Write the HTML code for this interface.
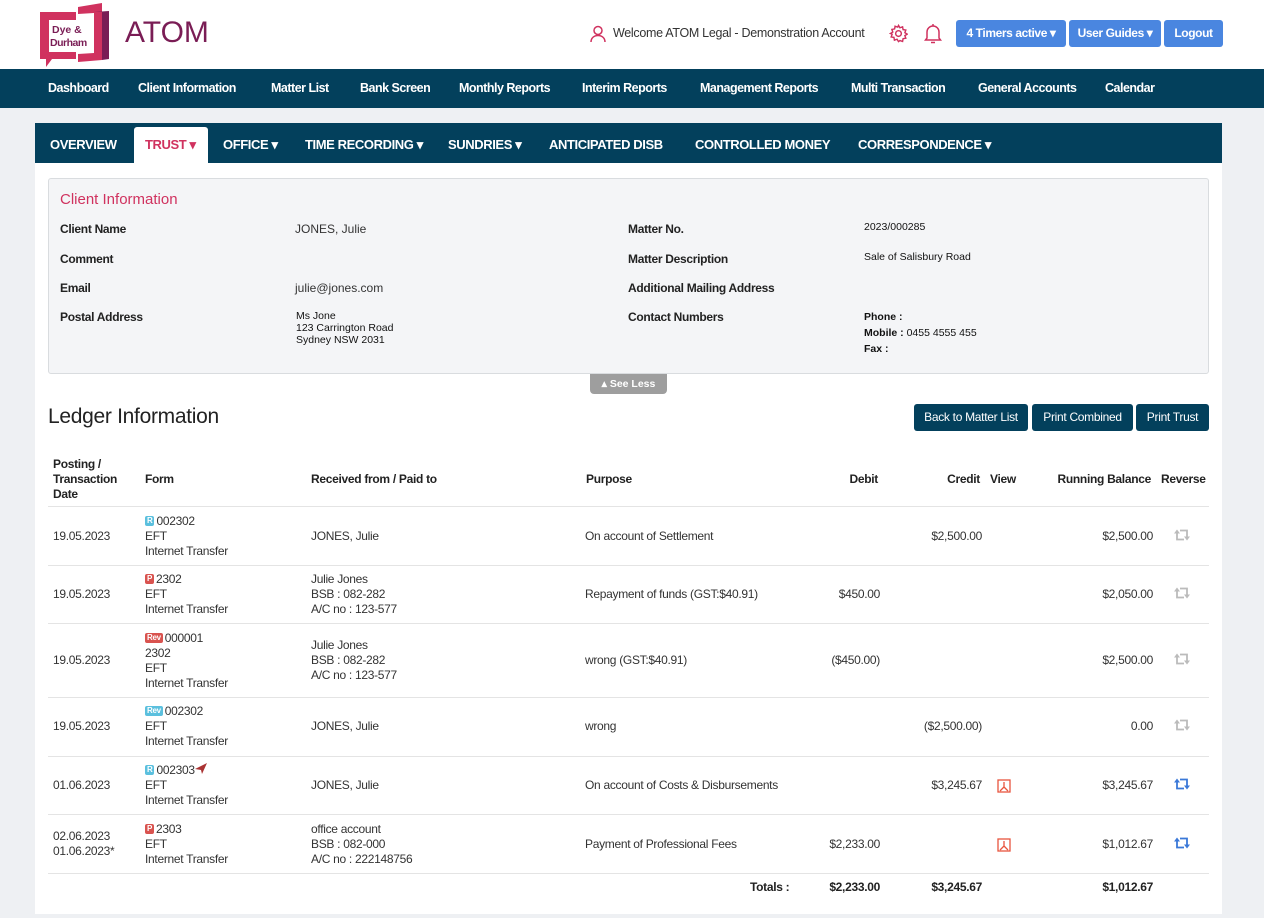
<!DOCTYPE html>
<html><head><meta charset="utf-8"><style>
*{margin:0;padding:0;box-sizing:border-box}
body{width:1264px;height:918px;background:#eef0f3;font-family:"Liberation Sans",sans-serif;position:relative;overflow:hidden;color:#333}
.a{position:absolute;white-space:nowrap}
#hdr{position:absolute;left:0;top:0;width:1264px;height:69px;background:#fff}
#nav{position:absolute;left:0;top:69px;width:1264px;height:39px;background:#03405c}
#nav span{position:absolute;top:12px;color:#fff;font-weight:bold;font-size:12.5px;letter-spacing:-0.5px}
#card{position:absolute;left:35px;top:123px;width:1187px;height:791px;background:#fff}
#tabs{position:absolute;left:35px;top:123px;width:1187px;height:40px;background:#03405c}
#tabs span{position:absolute;top:14px;color:#fff;font-weight:bold;font-size:13px;letter-spacing:-0.4px}
.btn{position:absolute;background:#4a86e0;color:#fff;font-weight:bold;font-size:12px;border-radius:3px;text-align:center;line-height:27px;letter-spacing:-0.4px}
.dk{position:absolute;background:#03405c;color:#fff;font-size:12px;border-radius:3px;text-align:center;line-height:27px;letter-spacing:-0.3px}
#info{position:absolute;left:48px;top:178px;width:1161px;height:196px;background:#f4f5f7;border:1px solid #d9dcdf;border-radius:3px}
.lb{position:absolute;font-weight:bold;font-size:12px;color:#222;letter-spacing:-0.3px}
.vl{position:absolute;font-size:12px;color:#333}
.sm{position:absolute;font-size:10.5px;color:#111;line-height:12px}
.t{position:absolute;font-size:12px;color:#333;line-height:15px;white-space:nowrap;letter-spacing:-0.3px}
.th{position:absolute;font-size:12px;font-weight:bold;color:#222;line-height:15px;letter-spacing:-0.3px}
.r{text-align:right}
.hl{position:absolute;left:48px;width:1161px;height:1px;background:#e4e4e4}
.bd{display:inline-block;font-size:8px;font-weight:bold;color:#fff;border-radius:2px;padding:0 2px;line-height:10px;vertical-align:2px;margin-right:2px}
.rb{background:#5bc0de}.pb{background:#d9534f}
.rev{position:absolute;width:16px;height:12px}
</style></head><body>
<div id="hdr">
<svg class="a" style="left:40px;top:2px" width="72" height="66" viewBox="0 0 72 66">
<path d="M0 10 L36 10 L36 18 L9 18 L9 50 L36 50 L36 57 L12 57 L6 65 L6 57 L0 57 Z" fill="#d0325f"/>
<path d="M38 5 L62 1 L62 58 L38 60 L38 52 L54 51 L54 11 L38 12 Z" fill="#d0325f"/>
<path d="M54 10 L69 9 L69 57 L62 58 L62 10 Z" fill="#7a1d55"/>
<text x="12" y="31" font-size="10.5" font-weight="bold" fill="#7a1d55" font-family="Liberation Sans">Dye &amp;</text>
<text x="10" y="44" font-size="10.5" font-weight="bold" fill="#7a1d55" font-family="Liberation Sans" letter-spacing="-0.5">Durham</text>
</svg>
<div class="a" style="left:125px;top:16px;font-size:30px;color:#7a1d55">ATOM</div>
<svg class="a" style="left:590px;top:25px" width="16" height="18" viewBox="0 0 16 18" fill="none" stroke="#d0325f" stroke-width="1.5"><circle cx="8" cy="5.5" r="4"/><path d="M1 17c0-4 3-6.5 7-6.5s7 2.5 7 6.5"/></svg>
<div class="a" style="left:613px;top:26px;font-size:12.5px;color:#333;letter-spacing:-0.3px">Welcome ATOM Legal - Demonstration Account</div>
<svg class="a" style="left:889px;top:24px" width="19" height="19" viewBox="0 0 20 20" fill="none" stroke="#d0325f" stroke-width="1.5"><circle cx="10" cy="10" r="3"/><path d="M10 1.5l1.5 2.5 2.8-1 .5 2.9 2.9.5-1 2.8 2.5 1.5-2.5 1.5 1 2.8-2.9.5-.5 2.9-2.8-1L10 18.5l-1.5-2.5-2.8 1-.5-2.9-2.9-.5 1-2.8L1.5 10 4 8.5l-1-2.8 2.9-.5.5-2.9 2.8 1z"/></svg>
<svg class="a" style="left:924px;top:23px" width="18" height="21" viewBox="0 0 18 21" fill="none" stroke="#d0325f" stroke-width="1.5"><path d="M3 15V9a6 6 0 0 1 12 0v6l1.5 2h-15z"/><path d="M7 19.5h4"/><path d="M9 1v2"/></svg>
<div class="btn" style="left:956px;top:20px;width:110px">4 Timers active ▾</div>
<div class="btn" style="left:1069px;top:20px;width:92px">User Guides ▾</div>
<div class="btn" style="left:1164px;top:20px;width:59px">Logout</div>
</div>
<div id="nav">
<span style="left:48px">Dashboard</span><span style="left:138px">Client Information</span><span style="left:271px">Matter List</span><span style="left:360px">Bank Screen</span><span style="left:459px">Monthly Reports</span><span style="left:582px">Interim Reports</span><span style="left:700px">Management Reports</span><span style="left:851px">Multi Transaction</span><span style="left:978px">General Accounts</span><span style="left:1105px">Calendar</span>
</div>
<div id="card"></div>
<div id="tabs">
<div class="a" style="left:99px;top:4px;width:74px;height:36px;background:#fff;border-radius:3px 3px 0 0"></div>
<span style="left:15px">OVERVIEW</span><span style="left:110px;color:#d0325f">TRUST ▾</span><span style="left:188px">OFFICE ▾</span><span style="left:270px">TIME RECORDING ▾</span><span style="left:413px">SUNDRIES ▾</span><span style="left:514px">ANTICIPATED DISB</span><span style="left:660px">CONTROLLED MONEY</span><span style="left:823px">CORRESPONDENCE ▾</span>
</div>
<div id="info"></div>
<div class="a" style="left:60px;top:191px;font-size:15px;color:#d0325f">Client Information</div>
<div class="lb" style="left:60px;top:222px">Client Name</div><div class="vl" style="left:295px;top:222px">JONES, Julie</div>
<div class="lb" style="left:60px;top:252px">Comment</div>
<div class="lb" style="left:60px;top:281px">Email</div><div class="vl" style="left:295px;top:281px">julie@jones.com</div>
<div class="lb" style="left:60px;top:310px">Postal Address</div>
<div class="sm" style="left:296px;top:310px">Ms Jone<br>123 Carrington Road<br>Sydney NSW 2031</div>
<div class="lb" style="left:628px;top:222px">Matter No.</div><div class="sm" style="left:864px;top:221px">2023/000285</div>
<div class="lb" style="left:628px;top:252px">Matter Description</div><div class="sm" style="left:864px;top:251px">Sale of Salisbury Road</div>
<div class="lb" style="left:628px;top:281px">Additional Mailing Address</div>
<div class="lb" style="left:628px;top:310px">Contact Numbers</div>
<div class="sm" style="left:864px;top:309px;line-height:16px;font-weight:bold">Phone :<br>Mobile : <span style="font-weight:normal">0455 4555 455</span><br>Fax :</div>
<div class="a" style="left:590px;top:374px;width:77px;height:20px;background:#9e9e9e;border-radius:0 0 4px 4px;color:#fff;font-size:10.5px;font-weight:bold;text-align:center;line-height:20px">▴ See Less</div>
<div class="a" style="left:48px;top:405px;font-size:21px;color:#222;letter-spacing:-0.3px">Ledger Information</div>
<div class="dk" style="left:914px;top:404px;width:114px">Back to Matter List</div>
<div class="dk" style="left:1032px;top:404px;width:101px">Print Combined</div>
<div class="dk" style="left:1136px;top:404px;width:73px">Print Trust</div>

<div class="th" style="left:53px;top:457px">Posting /<br>Transaction<br>Date</div>
<div class="th" style="left:145px;top:472px">Form</div>
<div class="th" style="left:311px;top:472px">Received from / Paid to</div>
<div class="th" style="left:586px;top:472px">Purpose</div>
<div class="th r" style="left:800px;top:472px;width:78px">Debit</div>
<div class="th r" style="left:900px;top:472px;width:80px">Credit</div>
<div class="th" style="left:990px;top:472px">View</div>
<div class="th r" style="left:1040px;top:472px;width:111px">Running Balance</div>
<div class="th" style="left:1161px;top:472px">Reverse</div>
<div class="hl" style="top:506px"></div><div class="hl" style="top:565px"></div><div class="hl" style="top:623px"></div><div class="hl" style="top:697px"></div><div class="hl" style="top:756px"></div><div class="hl" style="top:814px"></div><div class="hl" style="top:873px"></div>

<div class="t" style="left:53px;top:529px">19.05.2023</div>
<div class="t" style="left:145px;top:514px"><span class="bd rb">R</span>002302<br>EFT<br>Internet Transfer</div>
<div class="t" style="left:311px;top:529px">JONES, Julie</div>
<div class="t" style="left:585px;top:529px">On account of Settlement</div>
<div class="t r" style="left:880px;top:529px;width:102px">$2,500.00</div>
<div class="t r" style="left:1040px;top:529px;width:113px">$2,500.00</div>

<div class="t" style="left:53px;top:587px">19.05.2023</div>
<div class="t" style="left:145px;top:572px"><span class="bd pb">P</span>2302<br>EFT<br>Internet Transfer</div>
<div class="t" style="left:311px;top:572px">Julie Jones<br>BSB : 082-282<br>A/C no : 123-577</div>
<div class="t" style="left:585px;top:587px">Repayment of funds (GST:$40.91)</div>
<div class="t r" style="left:780px;top:587px;width:100px">$450.00</div>
<div class="t r" style="left:1040px;top:587px;width:113px">$2,050.00</div>

<div class="t" style="left:53px;top:653px">19.05.2023</div>
<div class="t" style="left:145px;top:631px"><span class="bd pb">Rev</span>000001<br>2302<br>EFT<br>Internet Transfer</div>
<div class="t" style="left:311px;top:638px">Julie Jones<br>BSB : 082-282<br>A/C no : 123-577</div>
<div class="t" style="left:585px;top:653px">wrong (GST:$40.91)</div>
<div class="t r" style="left:780px;top:653px;width:100px">($450.00)</div>
<div class="t r" style="left:1040px;top:653px;width:113px">$2,500.00</div>

<div class="t" style="left:53px;top:719px">19.05.2023</div>
<div class="t" style="left:145px;top:704px"><span class="bd rb">Rev</span>002302<br>EFT<br>Internet Transfer</div>
<div class="t" style="left:311px;top:719px">JONES, Julie</div>
<div class="t" style="left:585px;top:719px">wrong</div>
<div class="t r" style="left:880px;top:719px;width:102px">($2,500.00)</div>
<div class="t r" style="left:1040px;top:719px;width:113px">0.00</div>

<div class="t" style="left:53px;top:778px">01.06.2023</div>
<div class="t" style="left:145px;top:763px"><span class="bd rb">R</span>002303<svg width="12" height="11" viewBox="0 0 12 11" style="vertical-align:0"><path d="M0 6L12 0L7 11L6 7Z" fill="#a33"/></svg><br>EFT<br>Internet Transfer</div>
<div class="t" style="left:311px;top:778px">JONES, Julie</div>
<div class="t" style="left:585px;top:778px">On account of Costs &amp; Disbursements</div>
<div class="t r" style="left:880px;top:778px;width:102px">$3,245.67</div>
<div class="t r" style="left:1040px;top:778px;width:113px">$3,245.67</div>

<div class="t" style="left:53px;top:829px">02.06.2023<br>01.06.2023*</div>
<div class="t" style="left:145px;top:822px"><span class="bd pb">P</span>2303<br>EFT<br>Internet Transfer</div>
<div class="t" style="left:311px;top:822px">office account<br>BSB : 082-000<br>A/C no : 222148756</div>
<div class="t" style="left:585px;top:837px">Payment of Professional Fees</div>
<div class="t r" style="left:780px;top:837px;width:100px">$2,233.00</div>
<div class="t r" style="left:1040px;top:837px;width:113px">$1,012.67</div>

<div class="th" style="left:750px;top:880px">Totals :</div>
<div class="th r" style="left:780px;top:880px;width:100px">$2,233.00</div>
<div class="th r" style="left:880px;top:880px;width:102px">$3,245.67</div>
<div class="th r" style="left:1040px;top:880px;width:113px">$1,012.67</div>

<svg class="a" style="left:997px;top:779px" width="14" height="14" viewBox="0 0 14 14" fill="none" stroke="#e8553e" stroke-width="1.3"><rect x="1" y="1" width="12" height="12"/><path d="M7 3v5M7 8l-4 4M7 8l4 4"/></svg>
<svg class="a" style="left:997px;top:838px" width="14" height="14" viewBox="0 0 14 14" fill="none" stroke="#e8553e" stroke-width="1.3"><rect x="1" y="1" width="12" height="12"/><path d="M7 3v5M7 8l-4 4M7 8l4 4"/></svg>
<svg style="display:none"><symbol id="rv" viewBox="0 0 16 12"><path d="M3 4V10.5H10M13 8V1.5H6" fill="none" stroke="currentColor" stroke-width="1.8"/><path d="M0 4.5L3 0.5L6 4.5ZM10 7.5L13 11.5L16 7.5Z" fill="currentColor"/></symbol></svg>
<svg class="rev" style="left:1174px;top:529px;color:#bbb"><use href="#rv"/></svg>
<svg class="rev" style="left:1174px;top:587px;color:#bbb"><use href="#rv"/></svg>
<svg class="rev" style="left:1174px;top:653px;color:#bbb"><use href="#rv"/></svg>
<svg class="rev" style="left:1174px;top:719px;color:#bbb"><use href="#rv"/></svg>
<svg class="rev" style="left:1174px;top:778px;color:#3a78d8"><use href="#rv"/></svg>
<svg class="rev" style="left:1174px;top:837px;color:#3a78d8"><use href="#rv"/></svg>
</body></html>
